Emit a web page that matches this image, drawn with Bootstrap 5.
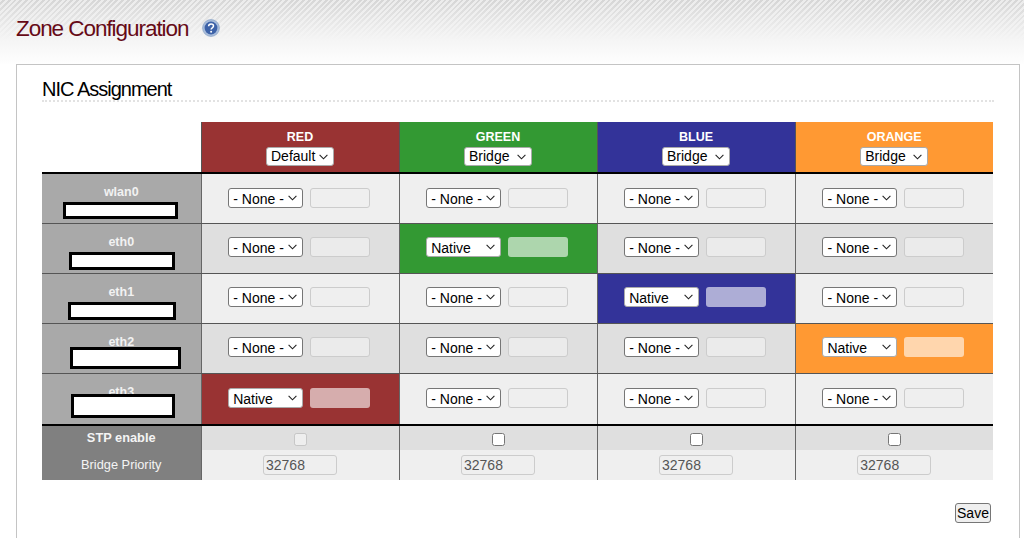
<!DOCTYPE html>
<html lang="en">
<head>
<meta charset="utf-8">
<title>Zone Configuration</title>
<link href="https://cdn.jsdelivr.net/npm/bootstrap@5.3.0/dist/css/bootstrap.min.css" rel="stylesheet">
<style>
html,body{height:538px;overflow:hidden}
body{font-family:"Liberation Sans",Arial,sans-serif;color:#000;background:#fff}
.top-band{height:64px;padding:15px 0 0 16px;background:linear-gradient(rgba(246,246,246,0) 0,#f5f5f5 40px,#fefefe 64px),repeating-linear-gradient(135deg,#ececec 0 2px,#d6d6d6 2px 4px)}
.page-title{font-size:22.5px;line-height:28px;letter-spacing:-1.05px;color:#660a17;margin:0}
.help-ico{width:18px;height:18px;margin-left:14px;margin-top:4px}
.panel-box{margin:0 4px 0 16px;border:1px solid #c4c4c4;border-bottom:0;padding:14px 25px 0;height:474px}
.sect-title{font-size:20px;line-height:21px;letter-spacing:-1px;font-weight:400;margin:0 0 20px;border-bottom:2px dotted #e2e2e2}
.zt{width:951px;table-layout:fixed;border-collapse:collapse;margin:0;font-size:12.8px}
.zt td,.zt th{padding:0;text-align:center;vertical-align:middle;border:0;border-left:1px solid #666;background:#efefef;position:relative}
.zt col.c0{width:159px}
.zt col.c1{width:198px}
.zt thead th{height:51px;color:#fff;font-size:12.5px;line-height:15px;font-weight:700;border-bottom:2px solid #000;border-left:1px solid #555;vertical-align:top;padding-top:8px}
.zt thead th.corner{background:#fff;border-left:0}
.zt thead .zn{display:block;margin-bottom:2px}
.zt tbody td,.zt tbody th{height:50px;border-bottom:1px solid #555}
.zt tbody td{padding-bottom:2px}
.zt tbody tr.r-alt td{background:#dfdfdf}
.zt tbody th.nic{background:#a9a9a9;color:#f2f2f2;font-weight:700;border-left:0;vertical-align:top;padding-top:11px;line-height:14px;font-size:12.5px}
.zt tbody tr.r-last td,.zt tbody tr.r-last th{height:52px;border-bottom:2px solid #000}
.zt tbody tr.r-last td{padding-bottom:3px}
.zt tbody tr.r-stp td,.zt tbody tr.r-stp th{height:25px;border-bottom:0;background:#dfdfdf;padding-bottom:0}
.zt tbody tr.r-pri td,.zt tbody tr.r-pri th{height:30px;border-bottom:0;background:#efefef;padding-bottom:0}
.zt tbody tr.r-stp th,.zt tbody tr.r-pri th{background:#808080;color:#f4f4f4;border-left:0;vertical-align:middle;padding:0}
.zt tbody tr.r-pri th{font-weight:400}
.zt td.z-red,.zt th.z-red,.zt tbody tr td.z-red{background:#993333}
.zt td.z-green,.zt th.z-green,.zt tbody tr td.z-green{background:#339933}
.zt td.z-blue,.zt th.z-blue,.zt tbody tr td.z-blue{background:#333399}
.zt td.z-orange,.zt th.z-orange,.zt tbody tr td.z-orange{background:#ff9933}
.zsel,.zmtu,.zpri,.save-btn{font-family:"Liberation Sans",Arial,sans-serif;font-size:14px}
.zsel{height:20px;appearance:none;-webkit-appearance:none;background:#fff url("data:image/svg+xml,%3Csvg xmlns='http://www.w3.org/2000/svg' width='9' height='6'%3E%3Cpath d='M.6.9 4.5 4.8 8.4.9' fill='none' stroke='%23222' stroke-width='1.1'/%3E%3C/svg%3E") no-repeat right 5px center;color:#000;border:1px solid #767676;border-radius:3px;padding:0 0 0 4px;vertical-align:middle;font-weight:400}
.zsel.s-role{width:75px;margin-left:-2px}
.zsel.s-head{height:19px;width:68px;display:inline-block;vertical-align:top}
.z-red>.zsel,.z-green>.zsel,.z-blue>.zsel,.z-orange>.zsel{border-color:#aaa}
.zmtu{width:60px;height:20px;margin-left:3px;border:1px solid #ccc;border-radius:3px;background:rgba(239,239,239,.7);padding:0 2px;vertical-align:middle}
.z-red .zmtu,.z-green .zmtu,.z-blue .zmtu,.z-orange .zmtu{border-color:transparent;background:rgba(255,255,255,.6)}
.zpri{width:74px;height:20px;border:1px solid #ccc;border-radius:3px;background:#efefef;color:#555;padding:0 2px;vertical-align:middle}
.zchk{width:13px;height:13px;margin:0;vertical-align:middle;display:inline-block}
.redact{position:absolute;background:#fff;border:3px solid #000}
.rd-0{left:21px;top:28px;width:115px;height:17px}
.rd-1{left:27px;top:28px;width:106px;height:18px}
.rd-2{left:26px;top:28px;width:108px;height:18px}
.rd-3{left:28px;top:23px;width:111px;height:22px}
.rd-4{left:29px;top:20px;width:104px;height:24px}
.save-row{padding:23px 3px 0 0}
.save-btn{height:20px;width:36px;padding:0;background:#efefef;border:1px solid #767676;border-radius:3px;color:#000;line-height:16px}
</style>
</head>
<body>
<header class="top-band d-flex align-items-start">
  <h1 class="page-title">Zone Configuration</h1>
  <svg class="help-ico" viewBox="0 0 18 18" role="img" aria-label="Help">
    <circle cx="9" cy="9" r="8.4" fill="#a9bddb" stroke="#8ea6c8" stroke-width=".8"/>
    <circle cx="9" cy="9" r="6.4" fill="#3d62a8"/>
    <path d="M6.6 7.2c0-1.5 1.1-2.3 2.5-2.3s2.4.8 2.4 2.1c0 1.9-2.4 1.8-2.4 3.6" fill="none" stroke="#fff" stroke-width="1.5"/>
    <circle cx="9.1" cy="12.7" r="1" fill="#fff"/>
  </svg>
</header>
<main class="panel-box">
  <h2 class="sect-title">NIC Assignment</h2>
  <table class="table zt">
    <colgroup><col class="c0"><col class="c1"><col class="c1"><col class="c1"><col class="c1"></colgroup>
    <thead>
      <tr>
        <th class="corner"></th>
        <th class="z-red"><span class="zn">RED</span><select class="zsel s-head"><option>Default</option></select></th>
        <th class="z-green"><span class="zn">GREEN</span><select class="zsel s-head"><option>Bridge</option></select></th>
        <th class="z-blue"><span class="zn">BLUE</span><select class="zsel s-head"><option>Bridge</option></select></th>
        <th class="z-orange"><span class="zn">ORANGE</span><select class="zsel s-head"><option>Bridge</option></select></th>
      </tr>
    </thead>
    <tbody>
      <tr>
        <th class="nic">wlan0<span class="redact rd-0"></span></th>
        <td><select class="zsel s-role"><option>- None -</option></select> <input class="zmtu" disabled></td>
        <td><select class="zsel s-role"><option>- None -</option></select> <input class="zmtu" disabled></td>
        <td><select class="zsel s-role"><option>- None -</option></select> <input class="zmtu" disabled></td>
        <td><select class="zsel s-role"><option>- None -</option></select> <input class="zmtu" disabled></td>
      </tr>
      <tr class="r-alt">
        <th class="nic">eth0<span class="redact rd-1"></span></th>
        <td><select class="zsel s-role"><option>- None -</option></select> <input class="zmtu" disabled></td>
        <td class="z-green"><select class="zsel s-role"><option>Native</option></select> <input class="zmtu" disabled></td>
        <td><select class="zsel s-role"><option>- None -</option></select> <input class="zmtu" disabled></td>
        <td><select class="zsel s-role"><option>- None -</option></select> <input class="zmtu" disabled></td>
      </tr>
      <tr>
        <th class="nic">eth1<span class="redact rd-2"></span></th>
        <td><select class="zsel s-role"><option>- None -</option></select> <input class="zmtu" disabled></td>
        <td><select class="zsel s-role"><option>- None -</option></select> <input class="zmtu" disabled></td>
        <td class="z-blue"><select class="zsel s-role"><option>Native</option></select> <input class="zmtu" disabled></td>
        <td><select class="zsel s-role"><option>- None -</option></select> <input class="zmtu" disabled></td>
      </tr>
      <tr class="r-alt">
        <th class="nic">eth2<span class="redact rd-3"></span></th>
        <td><select class="zsel s-role"><option>- None -</option></select> <input class="zmtu" disabled></td>
        <td><select class="zsel s-role"><option>- None -</option></select> <input class="zmtu" disabled></td>
        <td><select class="zsel s-role"><option>- None -</option></select> <input class="zmtu" disabled></td>
        <td class="z-orange"><select class="zsel s-role"><option>Native</option></select> <input class="zmtu" disabled></td>
      </tr>
      <tr class="r-last">
        <th class="nic">eth3<span class="redact rd-4"></span></th>
        <td class="z-red"><select class="zsel s-role"><option>Native</option></select> <input class="zmtu" disabled></td>
        <td><select class="zsel s-role"><option>- None -</option></select> <input class="zmtu" disabled></td>
        <td><select class="zsel s-role"><option>- None -</option></select> <input class="zmtu" disabled></td>
        <td><select class="zsel s-role"><option>- None -</option></select> <input class="zmtu" disabled></td>
      </tr>
      <tr class="r-stp">
        <th>STP enable</th>
        <td><input type="checkbox" class="zchk" disabled></td>
        <td><input type="checkbox" class="zchk"></td>
        <td><input type="checkbox" class="zchk"></td>
        <td><input type="checkbox" class="zchk"></td>
      </tr>
      <tr class="r-pri">
        <th>Bridge Priority</th>
        <td><input class="zpri" value="32768" disabled></td>
        <td><input class="zpri" value="32768" disabled></td>
        <td><input class="zpri" value="32768" disabled></td>
        <td><input class="zpri" value="32768" disabled></td>
      </tr>
    </tbody>
  </table>
  <div class="save-row d-flex justify-content-end"><button class="save-btn" type="button">Save</button></div>
</main>
<script src="https://cdn.jsdelivr.net/npm/bootstrap@5.3.0/dist/js/bootstrap.bundle.min.js"></script>
</body>
</html>
